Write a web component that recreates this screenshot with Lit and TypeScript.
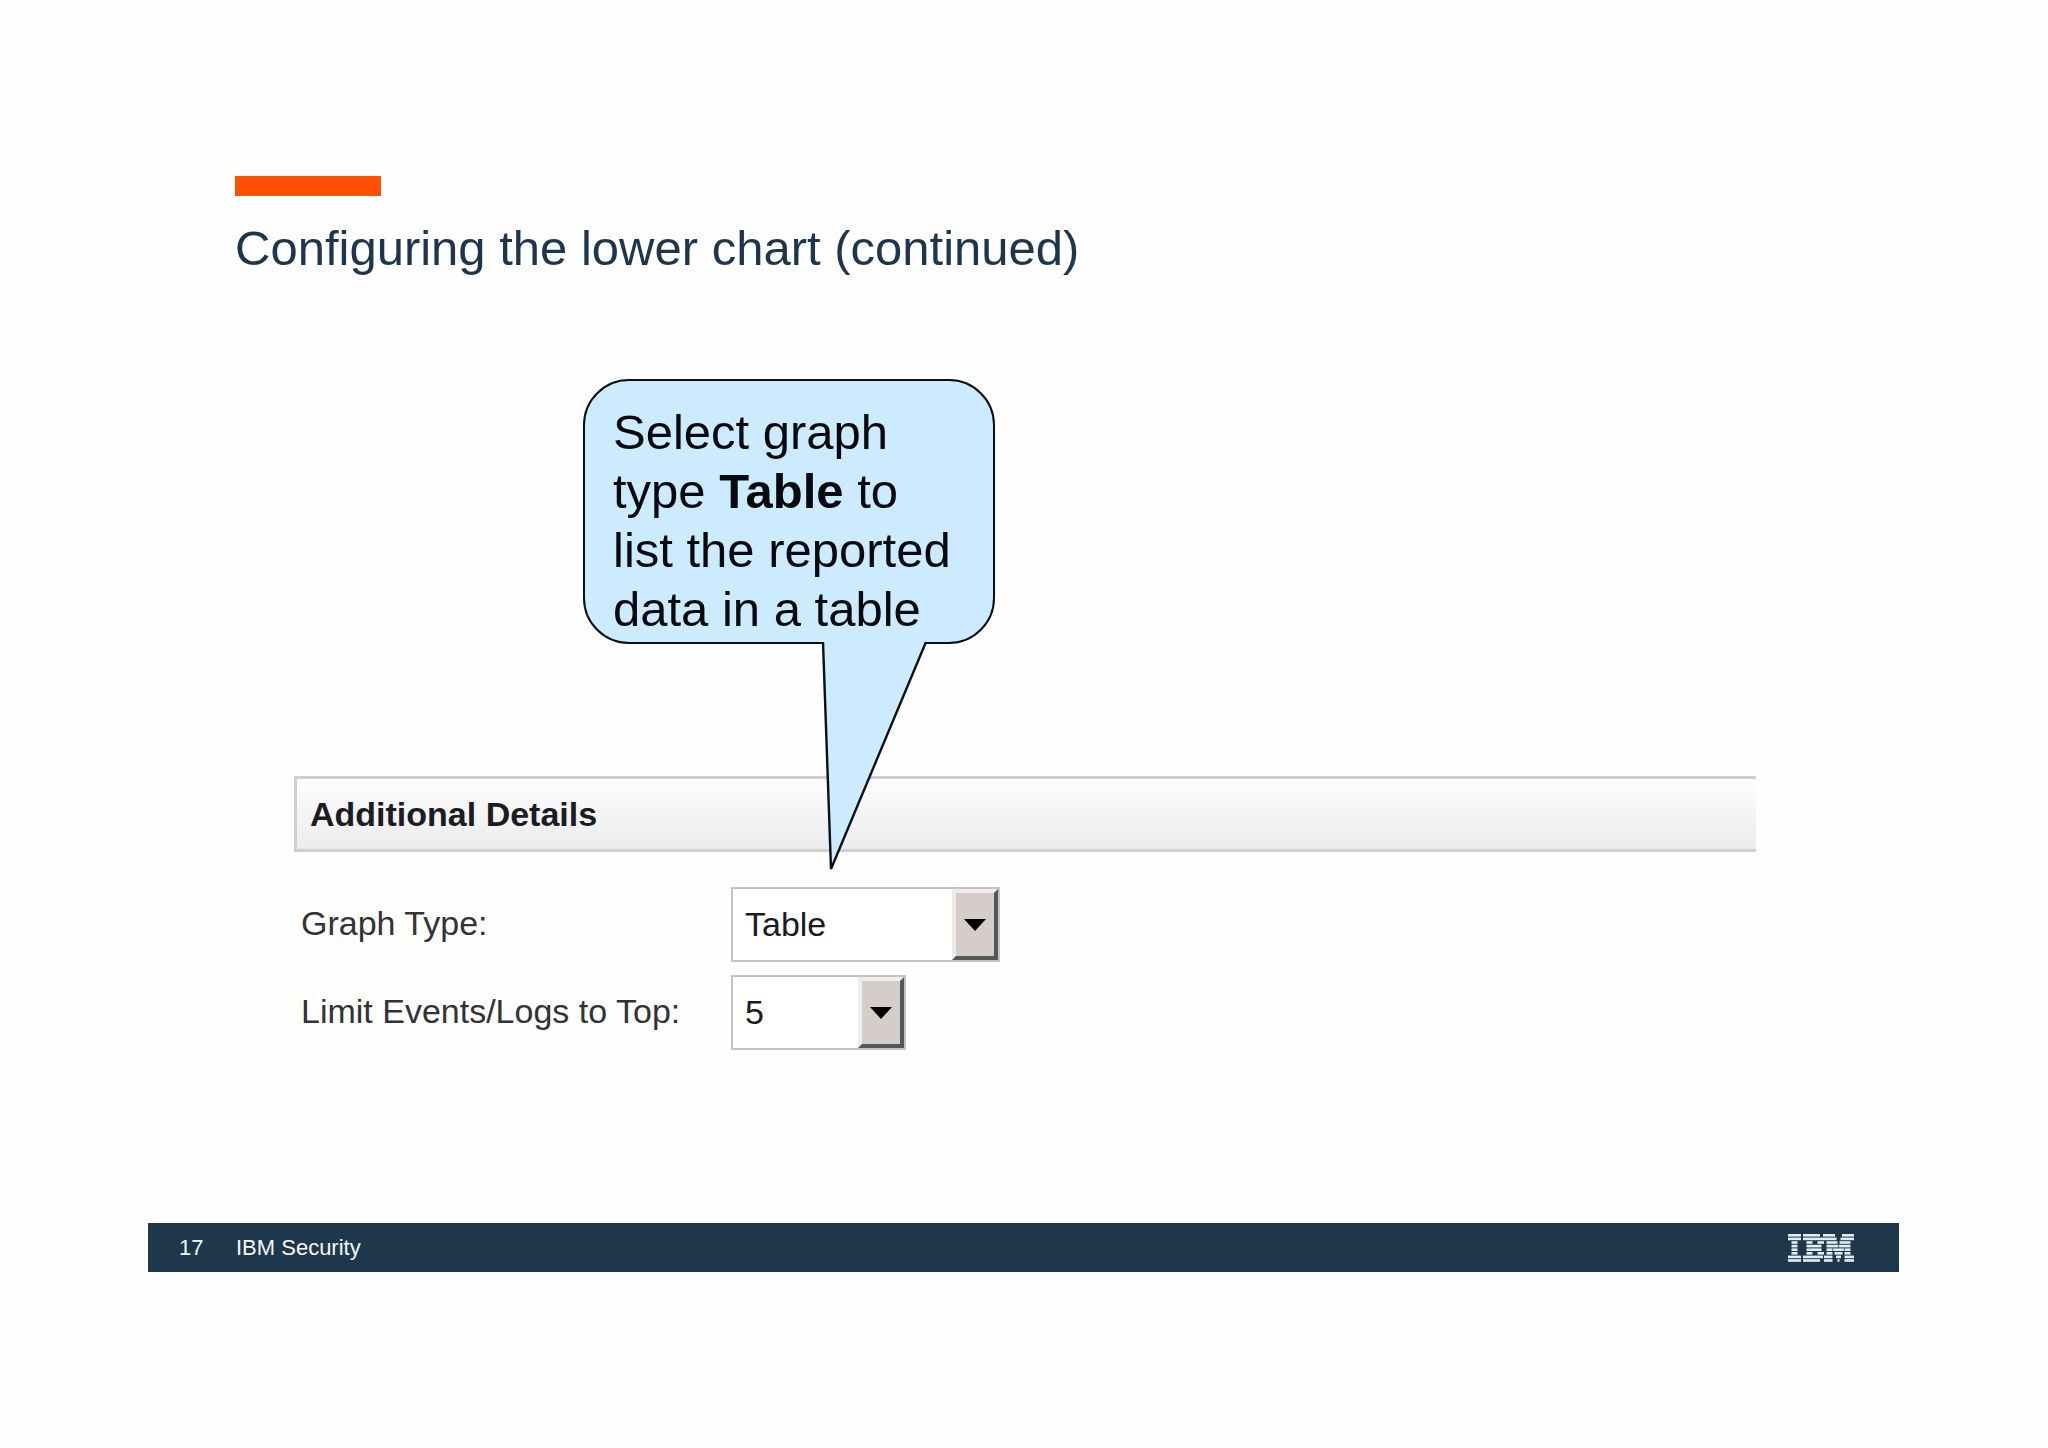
import { LitElement, html, css, svg } from "lit";
import { customElement, property } from "lit/decorators.js";

/** Drop-down with a raised grey arrow button at its right edge. */
@customElement("field-select")
class FieldSelect extends LitElement {
  @property() label = "";
  @property() size = "wide";
  @property({ attribute: false }) options: string[] = [];
  @property() value = "";

  static styles = css`
    :host { display: contents; }
    .label { color: #333; padding: 0 0 4px 7px; }
    .box { display: grid; justify-self: start; background: #fff; border: 2px solid #c4c4c8; height: 71px; }
    .wide { width: 265px; }
    .narrow { width: 171px; }
    .native, .arrow { grid-area: 1 / 1; }
    .native {
      appearance: none; border: 0; margin: 0; background: transparent; width: 100%;
      padding: 0 56px 2px 12px; font: inherit; color: #1b1b24;
    }
    .arrow {
      justify-self: end; width: 46px; box-sizing: border-box; pointer-events: none;
      display: grid; place-items: center; background: #d5cdc9;
      border: 4px solid; border-color: #efecea #55555a #55555a #efecea;
    }
  `;

  render() {
    return html`
      <label class="label" for="control">${this.label}</label>
      <div class="box ${this.size}">
        <select class="native" id="control">
          ${this.options.map((o) => html`<option ?selected=${o === this.value}>${o}</option>`)}
        </select>
        <span class="arrow" aria-hidden="true">
          <svg width="22" height="12" viewBox="0 0 22 12"><path d="M0 0h22L11 12z" fill="#000" /></svg>
        </span>
      </div>
    `;
  }
}

/** Eight horizontal stripes, each a list of [start, end] runs. */
const STRIPES: number[][][] = [
  [[0, 13], [15, 32], [35, 47], [54, 66]],
  [[0, 13], [15, 35], [35, 48.5], [52.5, 66]],
  [[3.5, 9.5], [18.5, 24.5], [29.5, 36], [38.5, 49.5], [51.5, 62.5]],
  [[3.5, 9.5], [18.5, 33.5], [38.5, 50.2], [50.8, 62.5]],
  [[3.5, 9.5], [18.5, 33.5], [38.5, 44.5], [45.2, 55.8], [56.5, 62.5]],
  [[3.5, 9.5], [18.5, 24.5], [29.5, 36], [38.5, 44.5], [46.5, 54.5], [56.5, 62.5]],
  [[0, 13], [15, 35], [36, 44.5], [48, 53], [56.5, 66]],
  [[0, 13], [15, 32], [36, 44.5], [49.5, 51.5], [56.5, 66]],
];

@customElement("app-root")
export class AppRoot extends LitElement {
  static styles = css`
    :host {
      display: block; min-height: 100vh; background: #fefefe;
      font-family: "Liberation Sans", Arial, sans-serif;
    }
    .slide { padding: 176px 149px 176px 148px; }
    .heading { padding-left: 87px; }
    .accent { width: 146px; height: 20px; background: #ff5003; }
    .title { margin: 24px 0 0; font-size: 49px; line-height: 56px; font-weight: 400; color: #1d364b; }
    .figure { margin: 103px 143px 0 146px; }
    .callout {
      position: relative; box-sizing: border-box; width: 412px; margin-left: 289px;
      padding: 22px 28px 3px; border: 2px solid #0a1016; border-radius: 46px;
      background: #cdebfe; color: #060a0e; font-size: 49px; line-height: 59px;
    }
    .text { margin: 0; }
    .tail { position: absolute; left: 235px; top: 100%; overflow: visible; }
    .bar {
      margin: 132px 0 0; padding: 0 13px; border: solid #d0ced2; border-width: 3px 0 3px 3px;
      background: linear-gradient(#fdfdfe, #ecebed);
      font-size: 34px; line-height: 70px; font-weight: 700; color: #1b1b24;
    }
    .fields {
      display: grid; grid-template-columns: 437px 1fr; row-gap: 13px; align-items: center;
      margin-top: 35px; font-size: 34px; line-height: 40px;
    }
    .footer {
      display: flex; align-items: center; height: 49px; margin-top: 173px; padding: 0 45px 0 31px;
      background: #1f374b; color: #f2f7fa; font-size: 22px; line-height: 26px;
    }
    .number { width: 57px; }
    .brand { flex: 1; }
  `;

  render() {
    return html`
      <main class="slide">
        <header class="heading">
          <div class="accent"></div>
          <h1 class="title">Configuring the lower chart (continued)</h1>
        </header>
        <section class="figure">
          <div class="callout">
            <p class="text">Select graph<br />type <b>Table</b> to<br />list the reported<br />data in a table</p>
            <svg class="tail" width="110" height="228" viewBox="0 0 110 228" aria-hidden="true">
              <path d="M4 -1H106V3H4z" fill="#cdebfe" />
              <path d="M3 0L11 227L106 0" fill="#cdebfe" stroke="#0a1016" stroke-width="2.4" />
            </svg>
          </div>
          <h2 class="bar">Additional Details</h2>
          <form class="fields">
            <field-select label="Graph Type:" .options=${["Table"]} value="Table"></field-select>
            <field-select label="Limit Events/Logs to Top:" size="narrow" .options=${["5"]} value="5"></field-select>
          </form>
        </section>
        <footer class="footer">
          <span class="number">17</span>
          <span class="brand">IBM Security</span>
          <svg width="66" height="28" viewBox="0 0 66 28" role="img" aria-label="IBM">
            ${STRIPES.map((runs, i) => runs.map(([a, b]) =>
              svg`<rect x=${a} y=${i * 3.6} width=${b - a} height="2.6" fill="#e3eef3" />`))}
          </svg>
        </footer>
      </main>
    `;
  }
}
